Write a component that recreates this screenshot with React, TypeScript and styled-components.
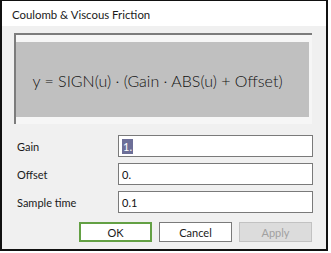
import React from "react";
import styled, { createGlobalStyle } from "styled-components";

const GlobalStyle = createGlobalStyle`
  html, body { margin: 0; padding: 0; background: #ffffff; }
  * { box-sizing: border-box; }
`;

const Window = styled.div`
  width: 328px;
  height: 251px;
  border-top: 1px solid #111;
  border-left: 2px solid #111;
  border-right: 2px solid #111;
  border-bottom: 2px solid #111;
  display: flex;
  flex-direction: column;
  font-family: Lato, "Open Sans", sans-serif;
`;

const TitleBar = styled.div`
  height: 25px;
  background: #ffffff;
  padding-left: 10px;
  display: flex;
  align-items: center;
  font-size: 11.4px;
  color: #1a1a1a;
  padding-top: 1px;
`;

const Body = styled.div`
  flex: 1;
  background: #f0f0f0;
  padding: 7px 13px 0 12px;
  display: flex;
  flex-direction: column;
`;

const FormulaPanel = styled.div`
  width: 298px;
  height: 91px;
  border-top: 2px solid #7c7c7c;
  border-left: 2px solid #7c7c7c;
  background: #f6f6f6;
  padding: 7px 3px 7px 0;
  display: flex;
  overflow: hidden;
`;

const FormulaBox = styled.div`
  flex: 1;
  min-width: 0;
  background: #c0c0c0;
  display: flex;
  align-items: center;
  justify-content: center;
  padding-right: 10px;
  padding-top: 2px;
  font-family: Lato, sans-serif;
  font-weight: 300;
  font-size: 16px;
  color: #111;
  white-space: nowrap;
  overflow: hidden;
`;

const Form = styled.div`
  margin-top: 11px;
  display: grid;
  grid-template-columns: 104px 195px;
  row-gap: 6px;
  align-items: center;
`;

const Label = styled.div`
  font-size: 11px;
  color: #1a1a1a;
  padding-left: 3px;
`;

const Field = styled.div`
  height: 22px;
  background: #ffffff;
  border: 1px solid #7a7a7a;
  display: flex;
  align-items: center;
  padding-left: 3px;
  font-size: 11px;
  color: #111;
`;

const Selected = styled.span`
  background: #6d6f98;
  color: #ffffff;
  padding: 0 1px;
  line-height: 15px;
`;

const ButtonRow = styled.div`
  margin-top: 9px;
  display: flex;
  justify-content: flex-end;
  gap: 7px;
  padding-right: 1px;
`;

const Button = styled.div<{ $variant?: "default" | "disabled" }>`
  width: 73px;
  height: 20px;
  display: flex;
  align-items: center;
  justify-content: center;
  font-size: 11px;
  background: ${(p) => (p.$variant === "disabled" ? "#dcdcdc" : "#ffffff")};
  color: ${(p) => (p.$variant === "disabled" ? "#a0a0a0" : "#1a1a1a")};
  border: ${(p) =>
    p.$variant === "default"
      ? "2px solid #63a044"
      : p.$variant === "disabled"
      ? "1px solid #c2c2c2"
      : "1px solid #7a7a7a"};
`;

export default function App() {
  return (
    <>
      <GlobalStyle />
      <Window>
        <TitleBar>Coulomb &amp; Viscous Friction</TitleBar>
        <Body>
          <FormulaPanel>
            <FormulaBox>y = SIGN(u) · (Gain · ABS(u) + Offset)</FormulaBox>
          </FormulaPanel>
          <Form>
            <Label>Gain</Label>
            <Field>
              <Selected>1.</Selected>
            </Field>
            <Label>Offset</Label>
            <Field>0.</Field>
            <Label>Sample time</Label>
            <Field>0.1</Field>
          </Form>
          <ButtonRow>
            <Button $variant="default">OK</Button>
            <Button>Cancel</Button>
            <Button $variant="disabled">Apply</Button>
          </ButtonRow>
        </Body>
      </Window>
    </>
  );
}
